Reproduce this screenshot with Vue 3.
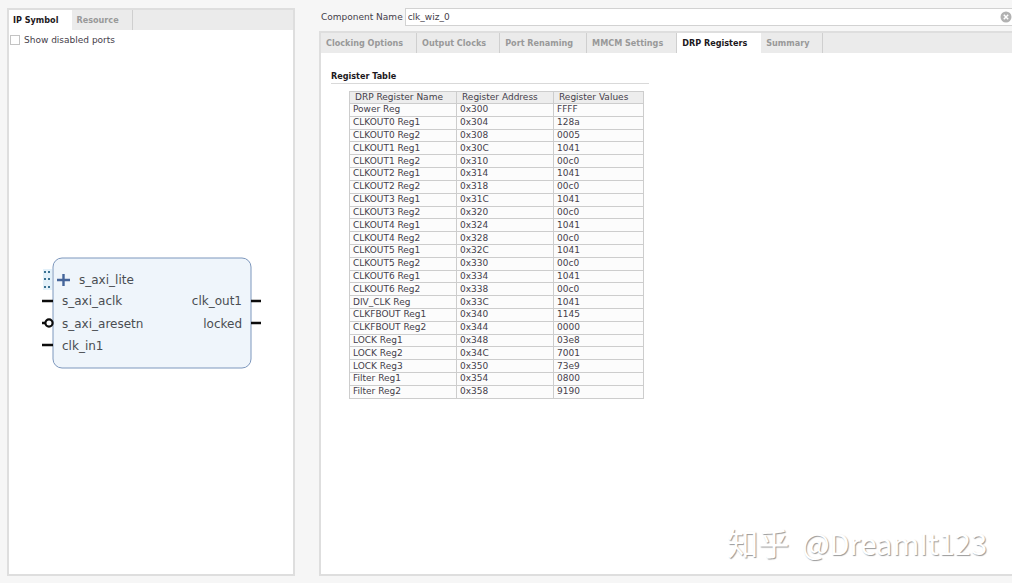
<script setup>
import { ref } from 'vue'

const componentName = ref('clk_wiz_0')
const showDisabled = ref(false)
const tabs = ['Clocking Options', 'Output Clocks', 'Port Renaming', 'MMCM Settings', 'DRP Registers', 'Summary']
const activeTab = ref('DRP Registers')
const leftTabs = ['IP Symbol', 'Resource']
const activeLeft = ref('IP Symbol')

const columns = ['DRP Register Name', 'Register Address', 'Register Values']
const registers = [
  ['Power Reg', '0x300', 'FFFF'],
  ['CLKOUT0 Reg1', '0x304', '128a'],
  ['CLKOUT0 Reg2', '0x308', '0005'],
  ['CLKOUT1 Reg1', '0x30C', '1041'],
  ['CLKOUT1 Reg2', '0x310', '00c0'],
  ['CLKOUT2 Reg1', '0x314', '1041'],
  ['CLKOUT2 Reg2', '0x318', '00c0'],
  ['CLKOUT3 Reg1', '0x31C', '1041'],
  ['CLKOUT3 Reg2', '0x320', '00c0'],
  ['CLKOUT4 Reg1', '0x324', '1041'],
  ['CLKOUT4 Reg2', '0x328', '00c0'],
  ['CLKOUT5 Reg1', '0x32C', '1041'],
  ['CLKOUT5 Reg2', '0x330', '00c0'],
  ['CLKOUT6 Reg1', '0x334', '1041'],
  ['CLKOUT6 Reg2', '0x338', '00c0'],
  ['DIV_CLK Reg', '0x33C', '1041'],
  ['CLKFBOUT Reg1', '0x340', '1145'],
  ['CLKFBOUT Reg2', '0x344', '0000'],
  ['LOCK Reg1', '0x348', '03e8'],
  ['LOCK Reg2', '0x34C', '7001'],
  ['LOCK Reg3', '0x350', '73e9'],
  ['Filter Reg1', '0x354', '0800'],
  ['Filter Reg2', '0x358', '9190'],
]
</script>

<template>
  <main class="wizard">
    <section class="panel symbol-panel">
      <nav class="tabs">
        <button
          v-for="t in leftTabs"
          :key="t"
          type="button"
          class="tab"
          :class="{ active: t === activeLeft }"
          @click="activeLeft = t"
        >{{ t }}</button>
      </nav>
      <label class="check">
        <input v-model="showDisabled" type="checkbox" />
        <span>Show disabled ports</span>
      </label>
      <div class="canvas">
        <svg class="symbol" width="220" height="112" viewBox="0 0 220 112">
          <rect x="11" y="1" width="198" height="110" rx="9" fill="#eff5fb" stroke="#7d97bd" />
          <rect x="1" y="12" width="9" height="21" fill="#e3f1fa" />
          <g fill="#3a7192">
            <rect x="2" y="14" width="2" height="2" /><rect x="6" y="14" width="2" height="2" />
            <rect x="2" y="21" width="2" height="2" /><rect x="6" y="21" width="2" height="2" />
            <rect x="2" y="29" width="2" height="2" /><rect x="6" y="29" width="2" height="2" />
          </g>
          <path d="M15 23H28M21.5 17V29" stroke="#45659a" stroke-width="2.4" fill="none" />
          <path d="M0 44H11M0 66H4M0 88H11M209 44H219M209 66H219" stroke="#0c0c0c" stroke-width="2.4" fill="none" />
          <circle cx="7" cy="66" r="3.6" fill="#fff" stroke="#0c0c0c" stroke-width="2.2" />
          <g class="ports">
            <text x="37" y="27">s_axi_lite</text>
            <text x="20" y="48">s_axi_aclk</text>
            <text x="20" y="71">s_axi_aresetn</text>
            <text x="20" y="93">clk_in1</text>
            <text x="200" y="48" text-anchor="end">clk_out1</text>
            <text x="200" y="71" text-anchor="end">locked</text>
          </g>
        </svg>
      </div>
    </section>

    <section class="config">
      <div class="name-row">
        <label for="component-name">Component Name</label>
        <div class="name-box">
          <input id="component-name" v-model="componentName" type="text" />
          <button type="button" class="clear" aria-label="Clear" @click="componentName = ''">
            <svg width="12" height="12" viewBox="0 0 12 12">
              <circle cx="6" cy="6" r="5.5" fill="#b2b2b2" />
              <path d="M3.8 3.8L8.2 8.2M8.2 3.8L3.8 8.2" stroke="#fff" stroke-width="1.5" />
            </svg>
          </button>
        </div>
      </div>
      <div class="panel config-panel">
        <nav class="tabs">
          <button
            v-for="t in tabs"
            :key="t"
            type="button"
            class="tab"
            :class="{ active: t === activeTab }"
            @click="activeTab = t"
          >{{ t }}</button>
        </nav>
        <div class="content">
          <h2>Register Table</h2>
          <table>
            <thead>
              <tr><th v-for="c in columns" :key="c" scope="col">{{ c }}</th></tr>
            </thead>
            <tbody>
              <tr v-for="r in registers" :key="r[1]">
                <td v-for="(v, i) in r" :key="i">{{ v }}</td>
              </tr>
            </tbody>
          </table>
        </div>
      </div>
    </section>
    <div class="watermark"><span class="site">知乎</span> <span>@DreamIt123</span></div>
  </main>
</template>

<style>
body { margin: 0; background: #f6f6f6; }
</style>

<style scoped>
* { box-sizing: border-box; }
.wizard {
  position: relative;
  display: grid;
  grid-template-columns: 288px minmax(0, 1fr);
  column-gap: 24px;
  min-height: 100vh;
  padding: 8px 0 7px 7px;
  background: #f6f6f6;
  color: #45404a;
  font: 9px/12px "DejaVu Sans", sans-serif;
}
button, input { font: inherit; color: inherit; margin: 0; }
.panel {
  display: flex;
  flex-direction: column;
  background: #fff;
  border: 2px solid #dedede;
}
.tabs { display: flex; height: 20px; background: #ebebeb; }
.tab {
  border: 0;
  border-right: 1px solid #cfcfcf;
  padding: 0 13px 0 5px;
  background: none;
  color: #999;
  font: bold 9px/12px "DejaVu Sans Condensed", "DejaVu Sans", sans-serif;
  white-space: nowrap;
}
.tab.active {
  background: #fff;
  border-color: #fff;
  color: #1c1820;
}
.symbol-panel .tab { padding-left: 4px; }
.check { display: flex; align-items: center; gap: 4px; height: 20px; padding-left: 1px; }
.check input {
  appearance: none;
  width: 10px;
  height: 10px;
  border: 1px solid #c4c4c4;
  background: #fff;
}
.check input:checked { background: #45659a; }
.canvas {
  flex: 1;
  display: flex;
  align-items: center;
  justify-content: center;
  padding: 2px 0 0 2px;
}
.symbol { display: block; }
.ports { font: 12px "DejaVu Sans", sans-serif; fill: #4a4d52; }
.config { display: flex; flex-direction: column; }
.name-row { display: flex; align-items: center; gap: 2px; height: 18px; padding-left: 2px; }
.name-box {
  flex: 1;
  display: flex;
  align-items: center;
  height: 18px;
  background: #fff;
  border: 1px solid #d2d2d2;
  border-right: 0;
}
.name-box input { flex: 1; min-width: 0; padding: 0 2px; border: 0; outline: 0; background: none; }
.clear { display: flex; padding: 0; border: 0; background: none; }
.config-panel { flex: 1; margin-top: 5px; border-right: 0; }
.content { padding: 17px 10px; }
h2 {
  width: 318px;
  margin: 0 0 7px;
  padding-bottom: 1px;
  border-bottom: 1px solid #d9d9d9;
  color: #1c1820;
  font: bold 9px/12px "DejaVu Sans Condensed", "DejaVu Sans", sans-serif;
}
table {
  width: 295px;
  height: 308px;
  margin-left: 18px;
  border-collapse: collapse;
  table-layout: fixed;
  border: 1px solid #bdbdbd;
  background: #fcfcfc;
}
th, td {
  padding: 0 3px;
  border: 1px solid #cdcdcd;
  text-align: left;
  font-weight: normal;
  line-height: 11px;
  white-space: nowrap;
}
th { padding-left: 5px; background: #ededed; }
th:first-child { width: 107px; }
th:nth-child(2) { width: 97px; }
.watermark {
  position: absolute;
  right: 25px;
  bottom: 21px;
  display: flex;
  align-items: center;
  gap: 13px;
  color: #fff;
  font: 29px/40px "Noto Sans CJK SC", sans-serif;
  text-shadow: 1px 1px 1px #999;
  white-space: nowrap;
}
.site { font-size: 31px; }
</style>
